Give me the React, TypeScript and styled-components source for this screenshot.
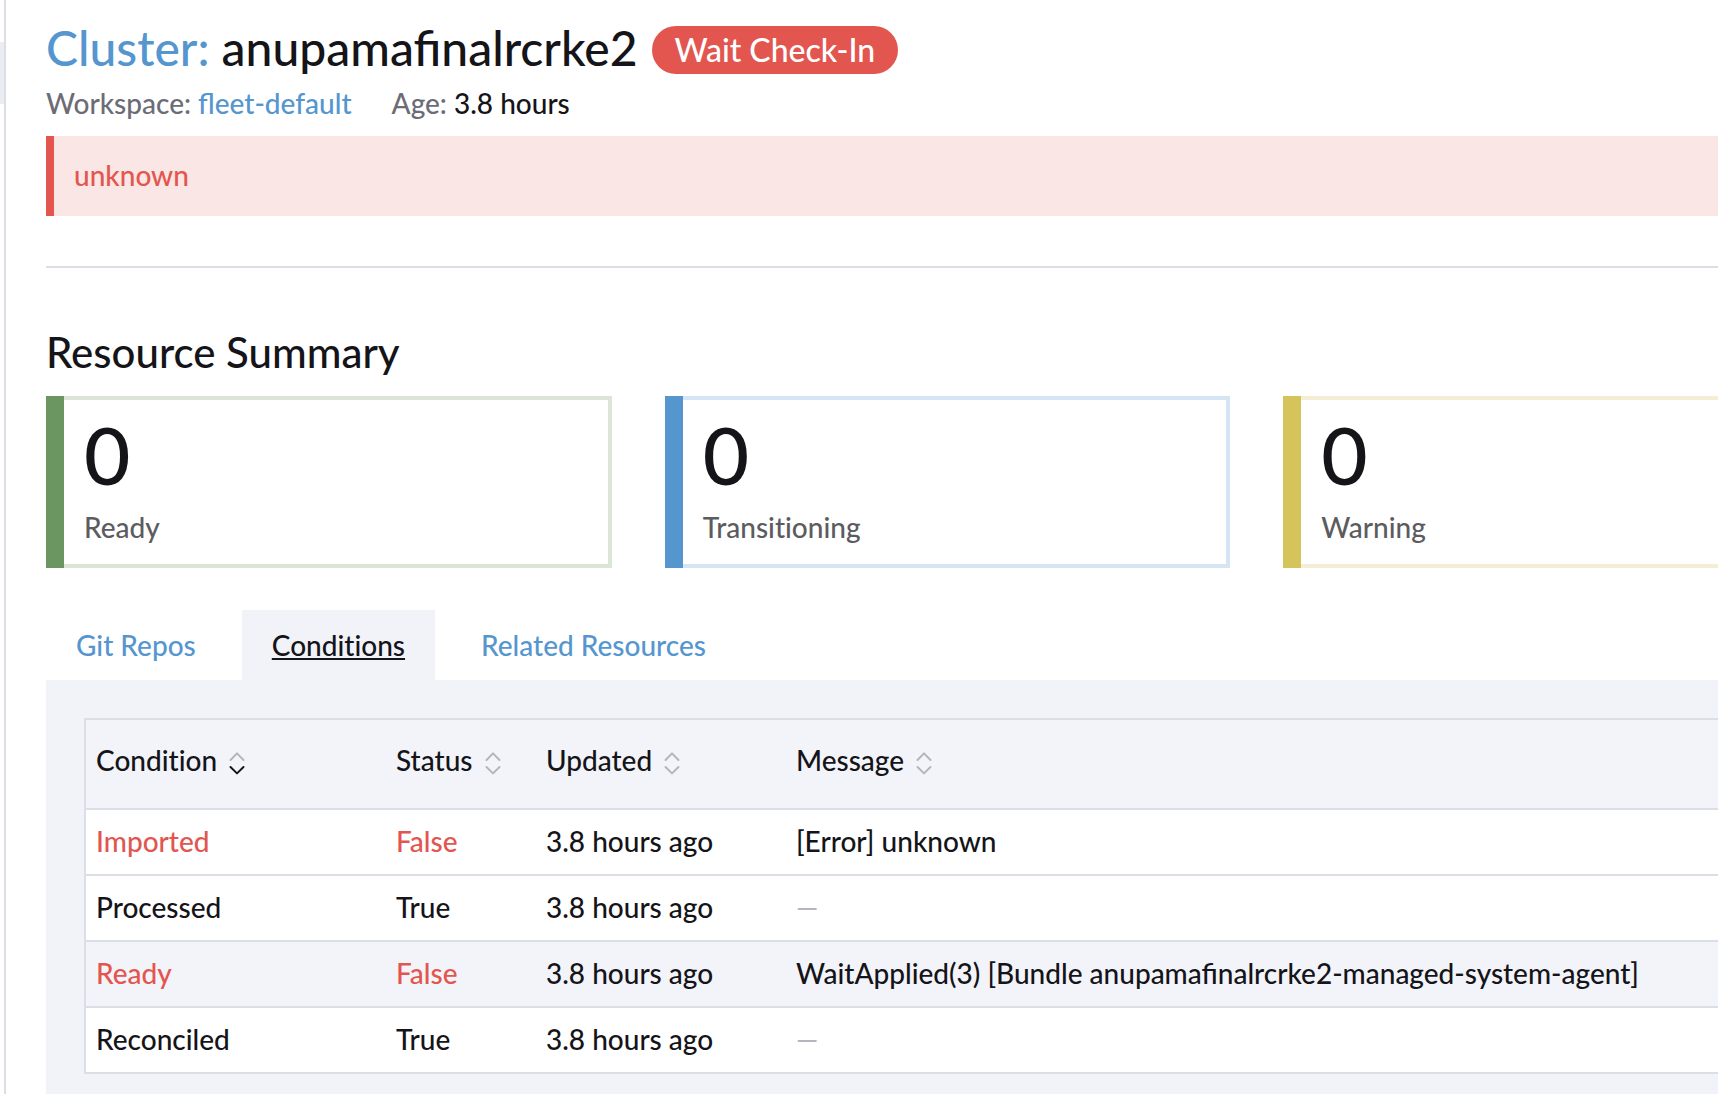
import React, { useState } from "react";
import styled, { createGlobalStyle } from "styled-components";

const color = {
  text: "#141419",
  muted: "#6c6c76",
  label: "#5c5c5f",
  dim: "#b6b6c2",
  link: "#5696ce",
  error: "#e2564f",
  errorSoft: "#fae6e4",
  border: "#dcdee7",
  panel: "#f2f3f9",
  header: "#f3f4f9",
};

const GlobalStyle = createGlobalStyle`
  *, *::before, *::after { box-sizing: border-box; }
  body {
    margin: 0;
    background: #fff;
    color: ${color.text};
    font: 500 28px/34px Lato, "Liberation Sans", sans-serif;
  }
`;

const Page = styled.div`
  display: flex;
  min-height: 100vh;
  overflow: hidden;
`;

const SideNav = styled.nav`
  flex: none;
  width: 6px;
  padding-top: 42px;
  border-right: 2px solid ${color.border};
`;

const SideNavCurrent = styled.div`
  height: 62px;
  background: #ecedf2;
`;

const Main = styled.main`
  flex: 1;
  min-width: 0;
  display: flex;
  flex-direction: column;
  padding: 19px 0 0 40px;
`;

const TitleRow = styled.header`
  display: flex;
  align-items: center;
  gap: 14px;
`;

const Title = styled.h1`
  margin: 0;
  font-size: 48px;
  line-height: 58px;
  font-weight: 500;
  white-space: nowrap;
`;

const Link = styled.a`
  color: ${color.link};
  text-decoration: none;
`;

const Badge = styled.span`
  margin-top: 4px;
  padding: 0 23px;
  border-radius: 24px;
  background: ${color.error};
  color: #fff;
  font-size: 32px;
  line-height: 48px;
  white-space: nowrap;
`;

const Meta = styled.div`
  display: flex;
  gap: 40px;
  margin-top: 9px;
  color: ${color.muted};
`;

const MetaValue = styled.span`
  color: ${color.text};
`;

const Banner = styled.div`
  margin-top: 16px;
  padding: 22px 20px 24px;
  border-left: 8px solid ${color.error};
  background: ${color.errorSoft};
  color: ${color.error};
`;

const Divider = styled.hr`
  width: 100%;
  height: 2px;
  margin: 50px 0 59px;
  border: 0;
  background: ${color.border};
`;

const SectionTitle = styled.h2`
  margin: 0 0 19px;
  font-size: 42px;
  line-height: 50px;
  font-weight: 500;
`;

const Cards = styled.div`
  display: grid;
  grid-auto-flow: column;
  grid-auto-columns: calc(37% - 53px);
  gap: 53px;
`;

const Card = styled.div<{ $accent: string; $edge: string }>`
  display: flex;
  background: ${(p) => p.$accent};
  padding-left: 18px;

  & > div {
    flex: 1;
    padding: 14px 20px 20px;
    border: 4px solid ${(p) => p.$edge};
    border-left: 0;
    background: #fff;
  }
`;

const Count = styled.div`
  margin-bottom: 16px;
  font-size: 80px;
  line-height: 80px;
`;

const CountLabel = styled.div`
  color: ${color.label};
  font-variant-ligatures: none;
`;

const Tabs = styled.div`
  display: flex;
  gap: 16px;
  margin-top: 42px;
`;

const Tab = styled.button<{ $active: boolean }>`
  padding: 18px 30px;
  border: 0;
  background: ${(p) => (p.$active ? color.panel : "transparent")};
  color: ${(p) => (p.$active ? color.text : color.link)};
  font: inherit;
  font-variant-ligatures: none;
  text-decoration: ${(p) => (p.$active ? "underline" : "none")};
  cursor: pointer;
`;

const Panel = styled.section`
  flex: 1;
  padding: 38px 0 20px 38px;
  background: ${color.panel};
`;

const Table = styled.table`
  width: 100%;
  table-layout: fixed;
  border-collapse: separate;
  border-spacing: 0;
  border: 2px solid ${color.border};
  border-width: 2px 0 0 2px;
`;

const Th = styled.th<{ $width?: number }>`
  width: ${(p) => (p.$width ? `${p.$width}px` : "auto")};
  height: 90px;
  padding: 0 10px 8px;
  border-bottom: 2px solid ${color.border};
  background: ${color.header};
  font-weight: 500;
  text-align: left;
`;

const SortButton = styled.button`
  display: flex;
  align-items: center;
  gap: 12px;
  padding: 0;
  border: 0;
  background: none;
  color: inherit;
  font: inherit;
  font-variant-ligatures: none;
  cursor: pointer;

  svg {
    flex: none;
    margin-top: 6px;
  }
`;

const Row = styled.tr<{ $shaded?: boolean }>`
  background: ${(p) => (p.$shaded ? color.header : "#fff")};
`;

const Td = styled.td<{ $tone?: string }>`
  height: 66px;
  padding: 0 10px 2px;
  border-bottom: 2px solid ${color.border};
  color: ${(p) => p.$tone ?? "inherit"};
  white-space: nowrap;
`;

function SortIcon({ sorted }: { sorted?: boolean }) {
  return (
    <svg width="16" height="24" viewBox="0 0 16 24" fill="none" strokeWidth="2" strokeLinecap="round" strokeLinejoin="round" aria-hidden="true">
      <path d="M1.5 9 8 2.4 14.5 9" stroke="#b4b5b9" />
      <path d="M1.5 16 8 22.4 14.5 16" stroke={sorted ? color.text : "#b4b5b9"} />
    </svg>
  );
}

const cards = [
  { label: "Ready", count: 0, accent: "#6b9662", edge: "#dbe5d8" },
  { label: "Transitioning", count: 0, accent: "#5696ce", edge: "#d5e5f4" },
  { label: "Warning", count: 0, accent: "#d5c35b", edge: "#f4eed6" },
];

const tabs = ["Git Repos", "Conditions", "Related Resources"];

const columns = [
  { label: "Condition", width: 300 },
  { label: "Status", width: 150 },
  { label: "Updated", width: 250 },
  { label: "Message" },
];

const conditions = [
  { name: "Imported", status: "False", updated: "3.8 hours ago", message: "[Error] unknown", error: true },
  { name: "Processed", status: "True", updated: "3.8 hours ago" },
  {
    name: "Ready",
    status: "False",
    updated: "3.8 hours ago",
    message: "WaitApplied(3) [Bundle anupamafinalrcrke2-managed-system-agent]",
    error: true,
    shaded: true,
  },
  { name: "Reconciled", status: "True", updated: "3.8 hours ago" },
];

export default function App() {
  const [activeTab, setActiveTab] = useState("Conditions");
  const [sortColumn, setSortColumn] = useState("Condition");

  return (
    <>
      <GlobalStyle />
      <Page>
        <SideNav>
          <SideNavCurrent />
        </SideNav>
        <Main>
          <TitleRow>
            <Title>
              <Link href="#clusters">Cluster:</Link> anupamafinalrcrke2
            </Title>
            <Badge>Wait Check-In</Badge>
          </TitleRow>
          <Meta>
            <span>
              Workspace: <Link href="#workspace">fleet-default</Link>
            </span>
            <span>
              Age: <MetaValue>3.8 hours</MetaValue>
            </span>
          </Meta>
          <Banner>unknown</Banner>
          <Divider />

          <SectionTitle>Resource Summary</SectionTitle>
          <Cards>
            {cards.map((c) => (
              <Card key={c.label} $accent={c.accent} $edge={c.edge}>
                <div>
                  <Count>{c.count}</Count>
                  <CountLabel>{c.label}</CountLabel>
                </div>
              </Card>
            ))}
          </Cards>

          <Tabs role="tablist">
            {tabs.map((t) => (
              <Tab key={t} role="tab" aria-selected={t === activeTab} $active={t === activeTab} onClick={() => setActiveTab(t)}>
                {t}
              </Tab>
            ))}
          </Tabs>
          <Panel role="tabpanel">
            <Table>
              <thead>
                <tr>
                  {columns.map((c) => (
                    <Th key={c.label} scope="col" $width={c.width}>
                      <SortButton onClick={() => setSortColumn(c.label)}>
                        {c.label}
                        <SortIcon sorted={c.label === sortColumn} />
                      </SortButton>
                    </Th>
                  ))}
                </tr>
              </thead>
              <tbody>
                {conditions.map((c) => (
                  <Row key={c.name} $shaded={c.shaded}>
                    <Td $tone={c.error ? color.error : undefined}>{c.name}</Td>
                    <Td $tone={c.error ? color.error : undefined}>{c.status}</Td>
                    <Td>{c.updated}</Td>
                    <Td $tone={c.message ? undefined : color.dim}>{c.message ?? "—"}</Td>
                  </Row>
                ))}
              </tbody>
            </Table>
          </Panel>
        </Main>
      </Page>
    </>
  );
}
